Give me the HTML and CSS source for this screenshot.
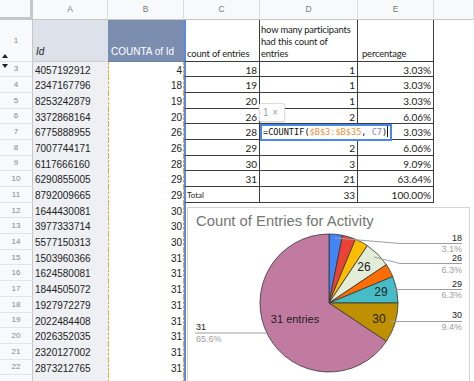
FILE: index.html
```html
<!DOCTYPE html>
<html lang="en">
<head>
  <meta charset="UTF-8" />
  <meta name="viewport" content="width=device-width, initial-scale=1.0" />
  <title>Count of Entries — Sheet</title>
  <link rel="stylesheet" href="styles.css">
</head>
<body>
  <div class="sheet">
    <div class="row head">
      <div class="corner"></div><div>A</div><div>B</div><div>C</div><div>D</div><div>E</div><div></div>
    </div>

    <div class="row tall">
      <div class="rn">1<span class="hid up"></span></div>
      <div class="id pivot-h"><i>Id</i></div>
      <div class="cnt pivot-h">COUNTA of Id</div>
      <div class="tc tb th">count of entries</div>
      <div class="tb th"><span>how many participants<br>had this count of<br>entries</span></div>
      <div class="tb th pc">percentage</div>
      <div></div>
    </div>

    <div class="row"><div class="rn">3<span class="hid down"></span></div><div class="id">4057192912</div><div class="cnt dash">4</div><div class="tc tb">18</div><div class="tb">1</div><div class="tb">3.03%</div><div></div></div>
    <div class="row"><div class="rn">4</div><div class="id">2347167796</div><div class="cnt dash">18</div><div class="tc tb">19</div><div class="tb">1</div><div class="tb">3.03%</div><div></div></div>
    <div class="row"><div class="rn">5</div><div class="id">8253242879</div><div class="cnt dash">19</div><div class="tc tb">20</div><div class="tb">1</div><div class="tb">3.03%</div><div></div></div>
    <div class="row"><div class="rn">6</div><div class="id">3372868164</div><div class="cnt dash">20</div><div class="tc tb">26</div><div class="tb">2</div><div class="tb">6.06%</div><div></div></div>
    <div class="row"><div class="rn">7</div><div class="id">6775888955</div><div class="cnt dash">26</div><div class="tc tb ref">28</div><div class="tb"></div><div class="tb">3.03%</div><div></div></div>
    <div class="row"><div class="rn">8</div><div class="id">7007744171</div><div class="cnt dash">26</div><div class="tc tb">29</div><div class="tb">2</div><div class="tb">6.06%</div><div></div></div>
    <div class="row"><div class="rn">9</div><div class="id">6117666160</div><div class="cnt dash">28</div><div class="tc tb">30</div><div class="tb">3</div><div class="tb">9.09%</div><div></div></div>
    <div class="row"><div class="rn">10</div><div class="id">6290855005</div><div class="cnt dash">29</div><div class="tc tb">31</div><div class="tb">21</div><div class="tb">63.64%</div><div></div></div>
    <div class="row"><div class="rn">11</div><div class="id">8792009665</div><div class="cnt dash">29</div><div class="tc tb total">Total</div><div class="tb">33</div><div class="tb">100.00%</div><div></div></div>
    <div class="row"><div class="rn">12</div><div class="id">1644430081</div><div class="cnt dash">30</div><div class="tc"></div><div></div><div></div><div></div></div>
    <div class="row"><div class="rn">13</div><div class="id">3977333714</div><div class="cnt dash">30</div><div class="tc"></div><div></div><div></div><div></div></div>
    <div class="row"><div class="rn">14</div><div class="id">5577150313</div><div class="cnt dash">30</div><div class="tc"></div><div></div><div></div><div></div></div>
    <div class="row"><div class="rn">15</div><div class="id">1503960366</div><div class="cnt dash">31</div><div class="tc"></div><div></div><div></div><div></div></div>
    <div class="row"><div class="rn">16</div><div class="id">1624580081</div><div class="cnt dash">31</div><div class="tc"></div><div></div><div></div><div></div></div>
    <div class="row"><div class="rn">17</div><div class="id">1844505072</div><div class="cnt dash">31</div><div class="tc"></div><div></div><div></div><div></div></div>
    <div class="row"><div class="rn">18</div><div class="id">1927972279</div><div class="cnt dash">31</div><div class="tc"></div><div></div><div></div><div></div></div>
    <div class="row"><div class="rn">19</div><div class="id">2022484408</div><div class="cnt dash">31</div><div class="tc"></div><div></div><div></div><div></div></div>
    <div class="row"><div class="rn">20</div><div class="id">2026352035</div><div class="cnt dash">31</div><div class="tc"></div><div></div><div></div><div></div></div>
    <div class="row"><div class="rn">21</div><div class="id">2320127002</div><div class="cnt dash">31</div><div class="tc"></div><div></div><div></div><div></div></div>
    <div class="row"><div class="rn">22</div><div class="id">2873212765</div><div class="cnt dash">31</div><div class="tc"></div><div></div><div></div><div></div></div>
    <div class="row"><div class="rn"></div><div class="id"></div><div class="cnt dash"></div><div class="tc"></div><div></div><div></div><div></div></div>

    <!-- hint + in-cell formula editor for D7 -->
    <div class="hint">1 <span>×</span></div>
    <div class="editor">=COUNTIF(<span class="r-b">$B$3:$B$35</span>, <span class="r-c">C7</span>)<span class="caret"></span></div>

    <!-- floating chart -->
    <div class="chart">
      <svg width="283" height="180" viewBox="0 0 283 180">
        <text class="title" x="9" y="18.5">Count of Entries for Activity</text>
        <g class="slices">
          <path fill="#4285f4" d="M142,96 L142,27 A69,69 0 0 1 155.46,28.33 Z"/>
          <path fill="#ea4335" d="M142,96 L155.46,28.33 A69,69 0 0 1 168.41,32.25 Z"/>
          <path fill="#fbbc04" d="M142,96 L168.41,32.25 A69,69 0 0 1 180.34,38.63 Z"/>
          <path fill="#e3ecd6" d="M142,96 L180.34,38.63 A69,69 0 0 1 199.37,57.66 Z"/>
          <path fill="#ff6d01" d="M142,96 L199.37,57.66 A69,69 0 0 1 205.75,69.59 Z"/>
          <path fill="#46bdc6" d="M142,96 L205.75,69.59 A69,69 0 0 1 211,96 Z"/>
          <path fill="#bf9000" d="M142,96 L211,96 A69,69 0 0 1 199.37,134.34 Z"/>
          <path fill="#c27ba0" d="M142,96 L199.37,134.34 A69,69 0 1 1 142,27 Z"/>
        </g>
        <g class="leaders">
          <path d="M148,31 L213,36.5 L275,36.5"/>
          <path d="M187,50 L213,56.5 L275,56.5"/>
          <path d="M205,82.5 L275,82.5"/>
          <path d="M202,114.5 L275,114.5"/>
          <path d="M8,126 L80,126"/>
        </g>
        <g class="inner">
          <text x="177" y="63.5">26</text>
          <text x="194" y="88.5">29</text>
          <text x="192" y="115.5">30</text>
          <text class="small" x="108" y="116">31 entries</text>
        </g>
        <g class="side">
          <text class="val" x="275" y="33.5">18</text>
          <text class="pct" x="275" y="45">3.1%</text>
          <text class="val" x="275" y="54">26</text>
          <text class="pct" x="275" y="65.5">6.3%</text>
          <text class="val" x="275" y="79.5">29</text>
          <text class="pct" x="275" y="91">6.3%</text>
          <text class="val" x="275" y="111">30</text>
          <text class="pct" x="275" y="123">9.4%</text>
          <text class="val left" x="9" y="123">31</text>
          <text class="pct left" x="9" y="135">65.6%</text>
        </g>
      </svg>
    </div>
  </div>
</body>
</html>
```

FILE: styles.css
```css
:root {
  --grid: #e2e3e6;
  --head-bg: #f8f9fa;
  --head-line: #c4c7c5;
  --ink: #222;
  --table-line: #3c3c3c;
  --sel-blue: #5a8be0;
  --range-orange: #e9a63c;
  --range-purple: #8e63ce;
}
* { box-sizing:border-box; margin:0; padding:0; }
body {
  width:474px; height:381px; overflow:hidden;
  background:#fff; color:var(--ink);
  font-family:"Liberation Sans", Arial, sans-serif;
}
.sheet { position:relative; height:381px; overflow:hidden; }

/* rows: row-number, A, B, C, D, E, F */
.row {
  display:grid;
  grid-template-columns:33px 75px 76px 76px 98px 76px 40px;
  height:15.7px;
  font-size:10px; line-height:15px;
}
.row > div { white-space:nowrap; overflow:hidden; }
.row.head { height:20px; }
.row.tall { height:41.5px; }

.head > div {
  background:var(--head-bg);
  border-right:1px solid #dadce0; border-bottom:1px solid var(--head-line);
  font-size:8.5px; color:#7a7a7a;
  display:flex; align-items:center; justify-content:center;
}
.head .corner { border-right:3px solid var(--head-line); border-bottom:3px solid var(--head-line); }

.rn {
  position:relative;
  background:var(--head-bg);
  border-right:1px solid var(--head-line); border-bottom:1px solid var(--grid);
  font-size:8px; color:#80868b;
  display:flex; align-items:center; justify-content:center;
}
.hid { position:absolute; left:2px; width:0; height:0; border-left:3px solid transparent; border-right:3px solid transparent; }
.hid.up { bottom:3px; border-bottom:4px solid #222; }
.hid.down { top:2px; border-top:4px solid #222; }

.id { background:#eef0f4; padding-left:2px; padding-top:1px; }
.cnt { text-align:right; padding-right:1px; padding-top:1px; }
.dash { border-left:1px dashed var(--range-orange); border-right:1px dashed var(--range-orange); }

.pivot-h { display:flex; align-items:flex-end; padding-bottom:3px; line-height:12px; }
.id.pivot-h { background:#dde2ea; padding-left:3px; border-bottom:1px solid #c9ced8; }
.cnt.pivot-h { background:#7b8eb0; color:#fff; padding-left:3px; justify-content:flex-start; border-bottom:1px solid #6d80a3; }

.tc { border-left:2px solid var(--sel-blue); }
.tb {
  font-family:Lato, "Open Sans", sans-serif; font-size:10px;
  text-align:right; padding-right:2px; padding-top:1px;
  border-right:1px solid var(--table-line); border-bottom:1px solid var(--table-line);
}
.tb.th {
  text-align:left;
  display:flex; align-items:flex-end;
  padding:0 1px 1px 1px; line-height:12px;
  font-size:9.4px; letter-spacing:-0.15px;
}
.tb.th.pc { padding-left:4px; }
.tb.total { text-align:left; font-size:8px; padding-left:1px; }
.ref { position:relative; }
.ref::after {
  content:""; position:absolute; left:0; right:0; top:-1px; bottom:-1px;
  border-top:1px dashed var(--range-purple); border-bottom:1px dashed var(--range-purple);
}

/* formula editor overlay on D7 */
.editor {
  position:absolute; left:260px; top:124px; width:132px; height:17px;
  background:#fff; border:2px solid #4a86e8;
  font-family:"DejaVu Sans Mono", "Liberation Mono", monospace; font-size:8.6px;
  line-height:13px; padding-left:1px; white-space:nowrap; color:#111;
}
.editor .r-b { color:#e69138; }
.editor .r-c { color:#8e7cc3; }
.caret { display:inline-block; width:1px; height:11px; background:#111; vertical-align:-2px; }
.hint {
  position:absolute; left:259px; top:103px; width:26px; height:19px;
  background:#fff; border:1px solid #dadce0; border-radius:2px;
  box-shadow:0 1px 2px rgba(0,0,0,0.12);
  font-size:10px; color:#9aa0a6; line-height:17px; padding-left:3px;
}
.hint span { margin-left:1px; }

/* chart */
.chart { position:absolute; left:187px; top:207px; width:283px; height:180px; background:#fff; border:1px solid #d3d3d3; }
.chart svg { display:block; position:absolute; left:-1px; top:-1px; font-family:"Liberation Sans", Arial, sans-serif; }
.chart .title { font-size:14.8px; fill:#757575; }
.slices path { stroke:#333; stroke-width:0.8; }
.leaders path { fill:none; stroke:#9e9e9e; stroke-width:1; }
.inner text { font-size:12px; fill:#222; text-anchor:middle; }
.inner text.small { font-size:11px; }
.side text { font-size:9px; text-anchor:end; }
.side text.left { text-anchor:start; }
.side .val { fill:#222; }
.side .pct { fill:#a0a0a0; }
```
